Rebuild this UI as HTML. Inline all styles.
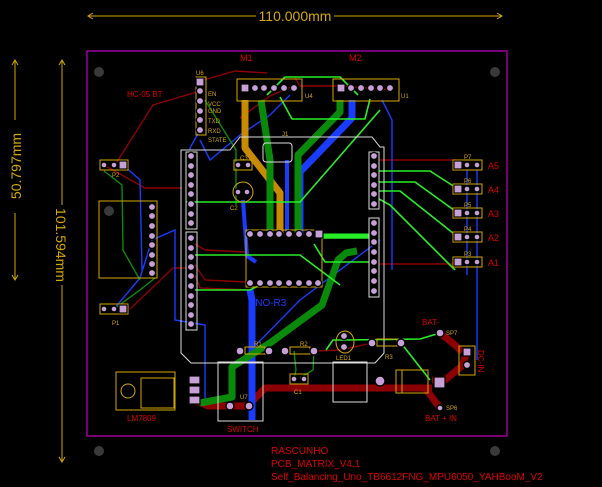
<!DOCTYPE html>
<html><head><meta charset="utf-8"><style>
html,body{margin:0;padding:0;background:#000;width:602px;height:487px;overflow:hidden}
svg{display:block}
text{font-family:"Liberation Sans",sans-serif}
</style></head><body>
<svg width="602" height="487" viewBox="0 0 602 487" xmlns="http://www.w3.org/2000/svg">
<rect width="602" height="487" fill="#000"/>
<!-- dimensions -->
<g stroke="#d4a800" fill="none" stroke-width="1">
<line x1="88" y1="16" x2="256" y2="16"/><line x1="334" y1="16" x2="502" y2="16"/>
<polyline points="93,13 88,16 93,19"/><polyline points="497,13 502,16 497,19"/>
<line x1="15" y1="60" x2="15" y2="120"/><line x1="15" y1="213" x2="15" y2="280"/>
<polyline points="12,65 15,60 18,65"/><polyline points="12,275 15,280 18,275"/>
<line x1="62" y1="60" x2="62" y2="205"/><line x1="62" y1="285" x2="62" y2="462"/>
<polyline points="59,65 62,60 65,65"/><polyline points="59,457 62,462 65,457"/>
</g>
<text x="295" y="21" fill="#d4a800" font-size="14" text-anchor="middle">110.000mm</text>
<text transform="translate(21,166) rotate(-90)" fill="#d4a800" font-size="14" text-anchor="middle">50.797mm</text>
<text transform="translate(56,245) rotate(90)" fill="#d4a800" font-size="14" text-anchor="middle">101.594mm</text>
<!-- board -->
<rect x="87" y="51" width="420" height="385" fill="none" stroke="#c000c0" stroke-width="1.2"/>
<g fill="#3a3a3a"><circle cx="99" cy="72" r="5"/><circle cx="495" cy="72" r="5"/><circle cx="99" cy="451" r="5"/><circle cx="495" cy="451" r="5"/><circle cx="109" cy="211" r="5"/></g>
<!-- thin red traces -->
<g stroke="#8b0000" fill="none" stroke-width="1.4">
<polyline points="115,165 153,105 200,91"/>
<polyline points="200,81 235,71 267,73"/>
<polyline points="240,118 270,96 293,86 296,88"/>
<polyline points="295,78 300,86 340,86 392,90"/>
<polyline points="104,165 145,188 182,188"/>
<polyline points="379,160 455,160 458,165"/>
<polyline points="379,264 455,264 458,262"/>
<polyline points="130,309 173,268 186,268"/>
<polyline points="195,244 205,250 246,252"/>
<polyline points="195,265 205,280 246,282"/>
<polyline points="195,275 200,288 250,290"/>
<polyline points="314,351 340,350 372,343"/>
</g>
<!-- thick red power -->
<g stroke="#8b0000" fill="none" stroke-width="7" stroke-linejoin="round">
<polyline points="195,400 208,406 248,406 265,388 432,388"/>
<polyline points="432,380 445,380 462,366 467,352"/>
<polyline points="440,333 455,345 462,352"/>
<polyline points="425,388 440,408"/>
</g>
<!-- blue -->
<g stroke="#1a3cff" fill="none" stroke-width="1.4">
<polyline points="123,165 140,180 142,270"/>
<polyline points="114,309 140,278 152,240 175,230 175,320 205,325 205,400"/>
<polyline points="200,130 190,148 190,150"/>
<polyline points="200,140 210,160 240,135 270,115 290,95"/>
<polyline points="382,100 392,120 392,270"/>
<polyline points="467,170 467,275"/><polyline points="477,170 477,360"/>
<polyline points="250,351 300,300 380,240"/>
</g>
<g stroke="#1a3cff" fill="none" stroke-width="7">
<polyline points="352,100 352,118 300,172 300,235"/>
<polyline points="250,290 252,300 252,420"/>
</g>
<g stroke="#1a3cff" fill="none" stroke-width="4"><polyline points="287,160 287,233"/><polyline points="243,200 247,256 256,262"/></g>
<!-- orange -->
<g stroke="#c88a00" fill="none" stroke-width="7" stroke-linejoin="round">
<polyline points="245,100 245,148 280,193 280,233"/>
</g>
<!-- dark green thick -->
<g stroke="#0a8a0a" fill="none" stroke-width="7" stroke-linejoin="round">
<polyline points="261,100 270,160 270,233"/>
<polyline points="340,100 340,112 298,155 298,233"/>
<polyline points="357,251 346,253 338,260 322,305 270,343 232,367 232,397 200,403"/>
</g>
<g stroke="#0a8a0a" fill="none" stroke-width="1.4">
<polyline points="104,171 122,185 123,250 140,280"/>
<polyline points="114,309 140,290 155,278"/>
<polyline points="205,100 236,150 236,205"/>
<polyline points="294,351 296,370 294,378"/><polyline points="314,351 313,370 300,378"/>
</g>
<!-- bright green -->
<g stroke="#28ee28" fill="none" stroke-width="1.6" stroke-linejoin="round">
<polyline points="267,95 285,77 340,77 358,95"/>
<polyline points="280,97 292,119 365,119 370,99"/>
<polyline points="186,202 300,202 380,110"/>
<polyline points="379,171 430,171 458,189"/>
<polyline points="379,182 415,182 458,213"/>
<polyline points="379,191 400,191 458,237"/>
<polyline points="379,199 390,205 455,270"/>
<polyline points="322,238 369,238"/><polyline points="314,244 325,262 369,262"/>
<polyline points="195,255 300,255 340,285"/>
<polyline points="195,290 250,290 260,285"/>
<polyline points="326,350 333,340 344,340 420,339 440,333"/>
<polyline points="401,343 430,380"/>
</g>
<g stroke="#28ee28" fill="none" stroke-width="5"><polyline points="322,236 369,236"/></g>
<!-- silkscreen white -->
<g stroke="#ddd" fill="none" stroke-width="1">
<polygon points="181,353 181,150 230,150 240,137 372,137 380,147 384,147 384,353 375,363 191,363"/>
<rect x="263" y="143" width="29" height="19" rx="3"/>
<rect x="218" y="362" width="45" height="59"/><rect x="333" y="362" width="34" height="40"/>
<rect x="186" y="152" width="11" height="77"/><rect x="186" y="232" width="11" height="98"/>
<rect x="369" y="152" width="10" height="57"/><rect x="369" y="218" width="10" height="79"/>
</g>
<!-- yellow silkscreen -->
<g stroke="#d4a800" fill="none" stroke-width="1">
<rect x="196" y="77" width="10" height="58"/>
<rect x="237" y="79" width="65" height="22"/><rect x="333" y="79" width="66" height="22"/>
<rect x="246" y="230" width="76" height="57"/>
<rect x="99" y="201" width="58" height="77"/>
<rect x="234" y="160" width="18" height="10"/>
<circle cx="243" cy="192" r="10"/>
<rect x="100" y="160" width="28" height="10"/><rect x="100" y="304" width="28" height="10"/>
<g id="p"><rect x="453" y="160" width="29" height="10"/></g>
<rect x="453" y="184" width="29" height="10"/><rect x="453" y="208" width="29" height="10"/>
<rect x="453" y="232" width="29" height="10"/><rect x="453" y="257" width="29" height="10"/>
<rect x="116" y="372" width="59" height="38"/><rect x="141" y="378" width="33" height="30"/>
<circle cx="128" cy="391" r="7"/>
<rect x="245" y="347" width="20" height="7"/><rect x="290" y="347" width="20" height="7"/>
<rect x="377" y="339" width="20" height="7"/>
<ellipse cx="345" cy="342" rx="9" ry="11"/>
<rect x="290" y="374" width="18" height="10"/>
<rect x="396" y="370" width="32" height="23"/><line x1="402" y1="370" x2="402" y2="393"/>
<rect x="459" y="346" width="16" height="29"/>
</g>
<!-- pads -->
<g fill="#c8a0d8" stroke="#000" stroke-width="1.4">
<circle cx="200" cy="91" r="3.6"/><circle cx="200" cy="101" r="3.6"/><circle cx="200" cy="111" r="3.6"/><circle cx="200" cy="120" r="3.6"/><circle cx="200" cy="130" r="3.6"/>
<circle cx="255" cy="88" r="3.6"/><circle cx="264" cy="88" r="3.6"/><circle cx="274" cy="88" r="3.6"/><circle cx="284" cy="88" r="3.6"/><circle cx="294" cy="88" r="3.6"/>
<circle cx="351" cy="88" r="3.6"/><circle cx="361" cy="88" r="3.6"/><circle cx="371" cy="88" r="3.6"/><circle cx="380" cy="88" r="3.6"/><circle cx="390" cy="88" r="3.6"/>
<circle cx="191" cy="156" r="3.6"/><circle cx="191" cy="166" r="3.6"/><circle cx="191" cy="175" r="3.6"/><circle cx="191" cy="185" r="3.6"/><circle cx="191" cy="194" r="3.6"/><circle cx="191" cy="204" r="3.6"/><circle cx="191" cy="214" r="3.6"/><circle cx="191" cy="223" r="3.6"/>
<circle cx="191" cy="238" r="3.6"/><circle cx="191" cy="248" r="3.6"/><circle cx="191" cy="257" r="3.6"/><circle cx="191" cy="267" r="3.6"/><circle cx="191" cy="276" r="3.6"/><circle cx="191" cy="286" r="3.6"/><circle cx="191" cy="296" r="3.6"/><circle cx="191" cy="305" r="3.6"/><circle cx="191" cy="315" r="3.6"/><circle cx="191" cy="324" r="3.6"/>
<circle cx="374" cy="156" r="3.6"/><circle cx="374" cy="166" r="3.6"/><circle cx="374" cy="175" r="3.6"/><circle cx="374" cy="185" r="3.6"/><circle cx="374" cy="194" r="3.6"/><circle cx="374" cy="204" r="3.6"/>
<circle cx="374" cy="223" r="3.6"/><circle cx="374" cy="233" r="3.6"/><circle cx="374" cy="242" r="3.6"/><circle cx="374" cy="252" r="3.6"/><circle cx="374" cy="262" r="3.6"/><circle cx="374" cy="271" r="3.6"/><circle cx="374" cy="281" r="3.6"/><circle cx="374" cy="291" r="3.6"/>
<circle cx="250" cy="234" r="3.6"/><circle cx="260" cy="234" r="3.6"/><circle cx="270" cy="234" r="3.6"/><circle cx="279" cy="234" r="3.6"/><circle cx="289" cy="234" r="3.6"/><circle cx="299" cy="234" r="3.6"/><circle cx="309" cy="234" r="3.6"/>
<circle cx="250" cy="283" r="3.6"/><circle cx="260" cy="283" r="3.6"/><circle cx="270" cy="283" r="3.6"/><circle cx="279" cy="283" r="3.6"/><circle cx="289" cy="283" r="3.6"/><circle cx="299" cy="283" r="3.6"/><circle cx="309" cy="283" r="3.6"/><circle cx="318" cy="283" r="3.6"/>
<circle cx="152" cy="207" r="3.6"/><circle cx="152" cy="216" r="3.6"/><circle cx="152" cy="226" r="3.6"/><circle cx="152" cy="236" r="3.6"/><circle cx="152" cy="245" r="3.6"/><circle cx="152" cy="255" r="3.6"/><circle cx="152" cy="264" r="3.6"/><circle cx="152" cy="273" r="3.6"/>
<circle cx="104" cy="165" r="3"/><circle cx="114" cy="165" r="3"/><circle cx="104" cy="309" r="3"/><circle cx="114" cy="309" r="3"/>
<circle cx="467" cy="165" r="3"/><circle cx="477" cy="165" r="3"/><circle cx="467" cy="189" r="3"/><circle cx="477" cy="189" r="3"/><circle cx="467" cy="213" r="3"/><circle cx="477" cy="213" r="3"/><circle cx="467" cy="237" r="3"/><circle cx="477" cy="237" r="3"/><circle cx="467" cy="262" r="3"/><circle cx="477" cy="262" r="3"/>
<circle cx="238" cy="165" r="3"/><circle cx="248" cy="165" r="3"/><circle cx="238" cy="192" r="3"/><circle cx="247" cy="192" r="3"/>
<circle cx="240" cy="351" r="4"/><circle cx="269" cy="351" r="4"/><circle cx="285" cy="351" r="4"/><circle cx="314" cy="351" r="4"/>
<circle cx="372" cy="343" r="4"/><circle cx="401" cy="343" r="4"/><circle cx="344" cy="336" r="3.6"/><circle cx="344" cy="347" r="3.6"/>
<circle cx="294" cy="379" r="3"/><circle cx="304" cy="379" r="3"/>
<circle cx="230" cy="406" r="4"/><circle cx="249" cy="406" r="4"/>
<circle cx="440" cy="333" r="4"/><circle cx="440" cy="408" r="3"/>
<circle cx="380" cy="381" r="5"/>
<circle cx="467" cy="365" r="3.6"/>
</g>
<g fill="#c8a0d8" stroke="#000" stroke-width="1.2">
<rect x="196" y="78" width="8" height="8"/><rect x="241" y="84" width="8" height="8"/><rect x="337" y="84" width="8" height="8"/>
<rect x="315" y="230" width="8" height="8"/><rect x="119" y="161" width="8" height="8"/><rect x="119" y="305" width="8" height="8"/>
<rect x="454" y="161" width="8" height="8"/><rect x="454" y="185" width="8" height="8"/><rect x="454" y="209" width="8" height="8"/><rect x="454" y="233" width="8" height="8"/><rect x="454" y="258" width="8" height="8"/>
<rect x="189" y="396" width="11" height="8"/><rect x="189" y="386" width="11" height="8"/><rect x="189" y="376" width="11" height="8"/>
<rect x="434" y="377" width="11" height="11"/><rect x="463" y="348" width="8" height="8"/>
</g>
<!-- labels -->
<g fill="#d00" font-size="9">
<text x="240" y="61">M1</text><text x="349" y="61">M2</text>
<text x="127" y="97" font-size="8">HC-05 BT</text>
<text x="488" y="169">A5</text><text x="488" y="193">A4</text><text x="488" y="217">A3</text><text x="488" y="241">A2</text><text x="488" y="266">A1</text>
<text x="422" y="325" font-size="8">BAT-</text><text x="425" y="421" font-size="8">BAT + IN</text>
<text x="127" y="421" font-size="8">LM7809</text><text x="227" y="432" font-size="8">SWITCH</text>
<text x="271" y="454" font-size="10">RASCUNHO</text>
<text x="271" y="467" font-size="10">PCB_MATRIX_V4.1</text>
<text x="271" y="480" font-size="10">Self_Balancing_Uno_TB6612FNG_MPU6050_YAHBooM_V2</text>
<text transform="translate(478,350) rotate(90)" font-size="8">DC-IN</text>
</g>
<text x="248" y="306" fill="#1a3cff" font-size="10">UNO-R3</text>
<g fill="#d4a800" font-size="6">
<text x="196" y="75">U6</text><text x="208" y="96">EN</text><text x="208" y="106">VCC</text><text x="208" y="113">GND</text><text x="208" y="123">TXD</text><text x="208" y="133">RXD</text><text x="208" y="133" dy="9">STATE</text>
<text x="305" y="98">U4</text><text x="401" y="98">U1</text><text x="282" y="136">J1</text>
<text x="240" y="160">C3</text><text x="230" y="210">C2</text>
<text x="112" y="177">P2</text><text x="112" y="325">P1</text>
<text x="464" y="159">P7</text><text x="464" y="183">P6</text><text x="464" y="207">P5</text><text x="464" y="231">P4</text><text x="464" y="256">P3</text>
<text x="254" y="346">R1</text><text x="300" y="346">R2</text><text x="385" y="359">R3</text>
<text x="336" y="360">LED1</text><text x="294" y="394">C1</text><text x="240" y="399">U7</text>
<text x="446" y="335">SP7</text><text x="446" y="410">SP6</text>
</g>
</svg>
</body></html>
